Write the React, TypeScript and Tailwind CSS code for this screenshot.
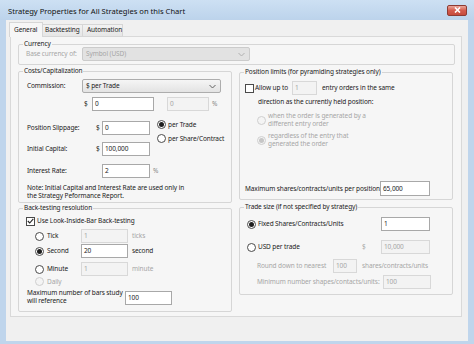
import React from 'react';

const Radio = ({ checked = false, disabled = false }: { checked?: boolean; disabled?: boolean }) => (
  <span
    className={`flex h-[9px] w-[9px] shrink-0 items-center justify-center rounded-full border ${
      disabled ? 'border-[#cfcfcf] bg-[#f4f4f4]' : 'border-[#4a4a4a] bg-white'
    }`}
  >
    {checked && <span className={`h-[5px] w-[5px] rounded-full ${disabled ? 'bg-[#c6c6c6]' : 'bg-[#1e1e1e]'}`} />}
  </span>
);

const Check = ({ checked = false }: { checked?: boolean }) => (
  <span className="flex h-[9px] w-[9px] shrink-0 items-center justify-center border border-[#4a4a4a] bg-white">
    {checked && (
      <svg width="7" height="6" viewBox="0 0 7 6">
        <path d="M0.8 3 L2.7 5 L6.3 0.8" fill="none" stroke="#222" strokeWidth="1.1" />
      </svg>
    )}
  </span>
);

const Box = ({ v, w, dis = false, h = 'h-[14px]' }: { v: string; w: string; dis?: boolean; h?: string }) => (
  <div
    className={`${w} ${h} flex shrink-0 items-center border pl-[2px] ${
      dis ? 'border-[#d8d8d8] bg-[#f3f3f3] text-[#a6a6a6]' : 'border-[#a8a8a8] bg-white text-[#1b1b1b]'
    }`}
  >
    {v}
  </div>
);

const Chevron = ({ c }: { c: string }) => (
  <svg width="7" height="5" viewBox="0 0 7 5" className="ml-auto mr-[4px]">
    <path d="M0.5 1 L3.5 4 L6.5 1" fill="none" stroke={c} strokeWidth="1" />
  </svg>
);

const Legend = ({ t }: { t: string }) => <legend className="ml-[4px] px-[1px] leading-[8px]">{t}</legend>;

export default function App() {
  return (
    <div className="flex h-[344px] w-[474px] flex-col overflow-hidden whitespace-nowrap bg-[#bfd5ec] text-[6.5px] leading-[8px] tracking-[-0.1px] text-[#1b1b1b] [font-family:'Noto_Sans',sans-serif]">
      {/* title bar */}
      <div className="flex h-[20px] shrink-0 items-center bg-gradient-to-b from-[#cde0f3] to-[#bcd3eb] pl-[8px] pr-[7px]">
        <span className="mt-[2px] text-[7.6px] tracking-normal text-[#111]">Strategy Properties for All Strategies on this Chart</span>
        <div className="ml-auto flex h-[11px] w-[20px] items-center justify-center rounded-[2px] border border-[#8d3b33] bg-gradient-to-b from-[#e9a69b] via-[#d45b4d] to-[#c64a3c]">
          <svg width="7" height="6" viewBox="0 0 7 6">
            <path d="M1 0.5 L6 5.5 M6 0.5 L1 5.5" stroke="white" strokeWidth="1.6" />
          </svg>
        </div>
      </div>

      {/* body */}
      <div className="mx-[6px] mb-[3px] flex flex-1 flex-col bg-[#f0f0f0] pl-[4px] pr-[6px] pt-[2px]">
        {/* tabs */}
        <div className="relative z-10 -ml-[1px] flex h-[15px]">
          <div className="flex h-[15px] w-[34px] items-start border border-b-0 border-[#d6d6d6] bg-[#f6f6f6] pl-[4px] pt-[3px]">
            General
          </div>
          <div className="mt-[2px] flex h-[13px] w-[40px] items-start border border-l-0 border-[#d6d6d6] bg-gradient-to-b from-[#f2f2f2] to-[#e6e6e6] pl-[2px] pt-[1px]">
            Backtesting
          </div>
          <div className="mt-[2px] flex h-[13px] w-[40px] items-start border border-l-0 border-[#d6d6d6] bg-gradient-to-b from-[#f2f2f2] to-[#e6e6e6] pl-[4px] pt-[1px]">
            Automation
          </div>
        </div>

        {/* panel */}
        <div className="-mt-[1px] flex h-[281px] flex-col border border-[#d9d9d9] bg-[#f6f6f6] pl-[7px] pr-[6px] pt-[3px]">
          {/* Currency */}
          <fieldset className="rounded-[2px] border border-[#d6d6d6]">
            <Legend t="Currency" />
            <div className="-mt-[1px] flex h-[14px] items-center pb-0 pl-[7px]">
              <span className="w-[56px] text-[#a6a6a6]">Base currency of:</span>
              <div className="flex h-[14px] w-[168px] items-center rounded-[2px] border border-[#cbcbcb] bg-[#e2e2e2] pl-[3px] text-[#a6a6a6]">
                Symbol (USD)
                <Chevron c="#b0b0b0" />
              </div>
            </div>
            <div className="h-[3px]" />
          </fieldset>

          <div className="mt-[2px] flex gap-[7px]">
            {/* left column */}
            <div className="flex w-[214px] flex-col">
              <fieldset className="rounded-[2px] border border-[#d6d6d6]">
                <Legend t="Costs/Capitalization" />
                <div className="flex flex-col pb-[2px] pl-[8px]">
                  <div className="mt-[4px] flex h-[14px] items-center">
                    <span className="w-[55px]">Commission:</span>
                    <div className="flex h-[14px] w-[139px] items-center rounded-[2px] border border-[#adadad] bg-gradient-to-b from-[#f5f5f5] to-[#e3e3e3] pl-[3px]">
                      $ per Trade
                      <Chevron c="#606060" />
                    </div>
                  </div>
                  <div className="mt-[4px] flex h-[14px] items-center">
                    <span className="w-[57px]" />
                    <span className="w-[8px]">$</span>
                    <Box v="0" w="w-[62px]" />
                    <div className="ml-[13px]">
                      <Box v="0" w="w-[42px]" dis />
                    </div>
                    <span className="ml-[3px] text-[#8a8a8a]">%</span>
                  </div>
                  <div className="mt-[10px] flex">
                    <div className="flex flex-col">
                      <div className="flex h-[14px] items-center">
                        <span className="w-[69px]">Position Slippage:</span>
                        <span className="w-[6px]">$</span>
                        <Box v="0" w="w-[48px]" />
                      </div>
                      <div className="mt-[7px] flex h-[14px] items-center">
                        <span className="w-[69px]">Initial Capital:</span>
                        <span className="w-[6px]">$</span>
                        <Box v="100,000" w="w-[48px]" />
                      </div>
                    </div>
                    <div className="-mt-[1px] ml-[7px] flex flex-col gap-[5px]">
                      <div className="flex h-[9px] items-center">
                        <Radio checked />
                        <span className="ml-[2px]">per Trade</span>
                      </div>
                      <div className="flex h-[9px] items-center">
                        <Radio />
                        <span className="ml-[2px]">per Share/Contract</span>
                      </div>
                    </div>
                  </div>
                  <div className="mt-[8px] flex h-[14px] items-center">
                    <span className="w-[75px]">Interest Rate:</span>
                    <Box v="2" w="w-[48px]" />
                    <span className="ml-[3px] text-[#8a8a8a]">%</span>
                  </div>
                  <div className="mt-[6px]">
                    Note: Initial Capital and Interest Rate are used only in
                    <br />
                    the Strategy Peformance Report.
                  </div>
                </div>
              </fieldset>

              <fieldset className="mt-[1px] rounded-[2px] border border-[#d6d6d6]">
                <Legend t="Back-testing resolution" />
                <div className="flex flex-col pb-[6px] pl-[7px]">
                  <div className="mt-[4px] flex h-[10px] items-center">
                    <Check checked />
                    <span className="ml-[2px]">Use Look-Inside-Bar Back-testing</span>
                  </div>
                  <div className="mt-[3px] flex h-[14px] items-center">
                    <span className="ml-[9px]" />
                    <Radio />
                    <span className="ml-[3px] w-[34px]">Tick</span>
                    <Box v="1" w="w-[47px]" dis />
                    <span className="ml-[4px] text-[#a6a6a6]">ticks</span>
                  </div>
                  <div className="mt-[1px] flex h-[14px] items-center">
                    <span className="ml-[9px]" />
                    <Radio checked />
                    <span className="ml-[3px] w-[34px]">Second</span>
                    <Box v="20" w="w-[47px]" />
                    <span className="ml-[4px]">second</span>
                  </div>
                  <div className="mt-[4px] flex h-[14px] items-center">
                    <span className="ml-[9px]" />
                    <Radio />
                    <span className="ml-[3px] w-[34px]">Minute</span>
                    <Box v="1" w="w-[47px]" dis />
                    <span className="ml-[4px] text-[#a6a6a6]">minute</span>
                  </div>
                  <div className="mt-[1px] flex h-[9px] items-center">
                    <span className="ml-[9px]" />
                    <Radio disabled />
                    <span className="ml-[3px] text-[#a6a6a6]">Daily</span>
                  </div>
                  <div className="mt-[3px] flex items-start">
                    <div className="ml-[1px] w-[98px]">
                      Maximum number of bars study
                      <br />
                      will reference
                    </div>
                    <div className="mt-[2px]">
                      <Box v="100" w="w-[47px]" />
                    </div>
                  </div>
                </div>
              </fieldset>
            </div>

            {/* right column */}
            <div className="mt-[1px] flex w-[214px] flex-col">
              <fieldset className="rounded-[2px] border border-[#d6d6d6]">
                <Legend t="Position limits (for pyramiding strategies only)" />
                <div className="flex flex-col pb-[3px] pl-[5px]">
                  <div className="mt-[5px] flex h-[14px] items-center">
                    <Check />
                    <span className="ml-[1px] w-[37px]">Allow up to</span>
                    <Box v="1" w="w-[25px]" dis />
                    <span className="ml-[5px]">entry orders in the same</span>
                  </div>
                  <div className="ml-[13px] mt-[3px]">direction as the currently held position:</div>
                  <div className="mt-[6px] flex items-center">
                    <span className="ml-[12px]" />
                    <Radio disabled />
                    <span className="ml-[2px] text-[#a6a6a6]">
                      when the order is generated by a
                      <br />
                      different entry order
                    </span>
                  </div>
                  <div className="mt-[4px] flex items-center">
                    <span className="ml-[12px]" />
                    <Radio disabled checked />
                    <span className="ml-[2px] text-[#a6a6a6]">
                      regardless of the entry that
                      <br />
                      generated the order
                    </span>
                  </div>
                  <div className="mt-[33px] flex h-[15px] items-center">
                    <span className="w-[135px]">Maximum shares/contracts/units per position</span>
                    <Box v="65,000" w="w-[50px]" h="h-[15px]" />
                  </div>
                </div>
              </fieldset>

              <fieldset className="mt-[3px] rounded-[2px] border border-[#d6d6d6]">
                <Legend t="Trade size (if not specified by strategy)" />
                <div className="flex flex-col pb-[5px] pl-[5px]">
                  <div className="mt-[6px] flex h-[14px] items-center">
                    <span className="ml-[2px]" />
                    <Radio checked />
                    <span className="ml-[2px] w-[123px]">Fixed Shares/Contracts/Units</span>
                    <Box v="1" w="w-[49px]" />
                  </div>
                  <div className="mt-[9px] flex h-[14px] items-center">
                    <span className="ml-[2px]" />
                    <Radio />
                    <span className="ml-[2px] w-[104px]">USD per trade</span>
                    <span className="w-[19px] text-[#a6a6a6]">$</span>
                    <Box v="10,000" w="w-[49px]" dis />
                  </div>
                  <div className="mt-[5px] flex h-[14px] items-center">
                    <span className="ml-[12px] w-[76px] text-[#a6a6a6]">Round down to nearest</span>
                    <Box v="100" w="w-[24px]" dis />
                    <span className="ml-[5px] text-[#a6a6a6]">shares/contracts/units</span>
                  </div>
                  <div className="mt-[2px] flex h-[14px] items-center">
                    <span className="ml-[12px] w-[126px] text-[#a6a6a6]">Minimum number shapes/contacts/units:</span>
                    <Box v="100" w="w-[48px]" dis />
                  </div>
                </div>
              </fieldset>
            </div>
          </div>
        </div>
      </div>
    </div>
  );
}
